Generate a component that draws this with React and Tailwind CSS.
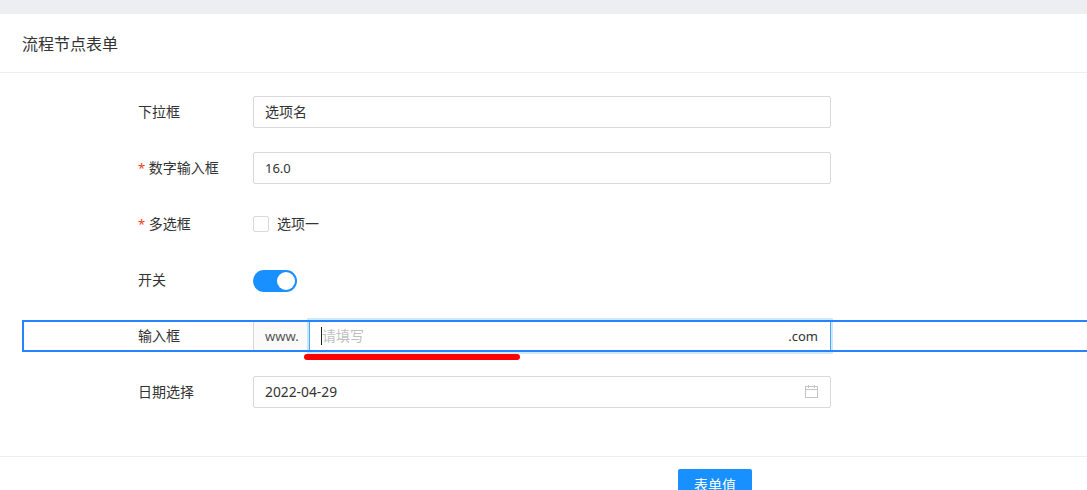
const fontStack = "font-['Noto_Sans','Noto_Sans_CJK_SC',sans-serif]";

function FormRow({ label, required, children }) {
  return (
    <div className="flex h-8 items-center mb-6">
      <label className="w-[231px] pl-[116px] text-sm text-[#333] leading-8 whitespace-nowrap">
        {required && <span className="text-[#ed4014] text-[13px] mr-[3.5px]">*</span>}
        {label}
      </label>
      <div className="w-[578px] h-8">{children}</div>
    </div>
  );
}

function TextBox({ children }) {
  return (
    <div className="flex h-8 items-center justify-between border border-[#d9d9d9] rounded-[2px] px-[11px] text-sm text-[#333]">
      {children}
    </div>
  );
}

function Calendar() {
  return (
    <svg width="14" height="14" viewBox="0 0 14 14" fill="none" stroke="#c4c4c4" strokeWidth="1">
      <rect x="0.5" y="1.5" width="12" height="11" />
      <path d="M0.5 4.5H12.5M3.5 0V3M9.5 0V3" />
    </svg>
  );
}

export default function App() {
  return (
    <div className={`h-[490px] overflow-hidden bg-white ${fontStack}`}>
      <div className="h-[14px] bg-[#eceef1]" />
      <div className="h-[59px] flex items-center border-b border-[#eeeeee] pl-[22px] pt-px text-base text-[#333]">
        流程节点表单
      </div>

      <div className="pl-[22px] pt-[23px]">
        <FormRow label="下拉框">
          <TextBox>选项名</TextBox>
        </FormRow>

        <FormRow label="数字输入框" required>
          <TextBox>
            <span className="text-[13px] pt-px">16.0</span>
          </TextBox>
        </FormRow>

        <FormRow label="多选框" required>
          <div className="flex h-8 items-center text-sm text-[#333]">
            <span className="w-4 h-4 border border-[#d9d9d9] rounded-[2px] bg-white" />
            <span className="ml-2">选项一</span>
          </div>
        </FormRow>

        <FormRow label="开关">
          <div className="flex h-8 items-center pt-px">
            <span className="flex items-center justify-end w-11 h-[22px] rounded-full bg-[#1890ff] pr-[2px]">
              <span className="w-[18px] h-[18px] rounded-full bg-white" />
            </span>
          </div>
        </FormRow>

        <div className="relative">
          <FormRow label="输入框">
            <div className="flex h-8 text-sm">
              <span className="flex items-center w-[56px] bg-[#fafafa] border border-r-0 border-[#d9d9d9] pl-[11px] pt-px text-[13px] text-[#555]">
                www.
              </span>
              <div className="flex flex-1 items-center justify-between border border-[#40a9ff] shadow-[0_0_0_2px_rgba(24,144,255,0.2)] pl-[11px] pr-[12px]">
                <span className="flex items-center text-[#bfbfbf]">
                  <span className="w-px h-[18px] bg-[#222]" />
                  请填写
                </span>
                <span className="text-[13px] pt-px text-[#333]">.com</span>
              </div>
            </div>
          </FormRow>
          {/* 选中行的蓝色外框 */}
          <div className="absolute left-0 top-0 w-[1080px] h-8 border-2 border-[#2483ff] pointer-events-none" />
          {/* 红色标注线 */}
          <div className="absolute left-[282px] top-[34px] w-[216px] h-[6px] rounded-[3px] bg-[#f00]" />
        </div>

        <FormRow label="日期选择">
          <TextBox>
            <span className="text-[13.8px]">2022-04-29</span>
            <Calendar />
          </TextBox>
        </FormRow>
      </div>

      <div className="mt-[48px] border-t border-[#eeeeee] flex pl-[678px] pt-3">
        <button className="w-[74px] h-8 bg-[#1890ff] text-white text-sm rounded-[2px]">
          表单值
        </button>
      </div>
    </div>
  );
}
